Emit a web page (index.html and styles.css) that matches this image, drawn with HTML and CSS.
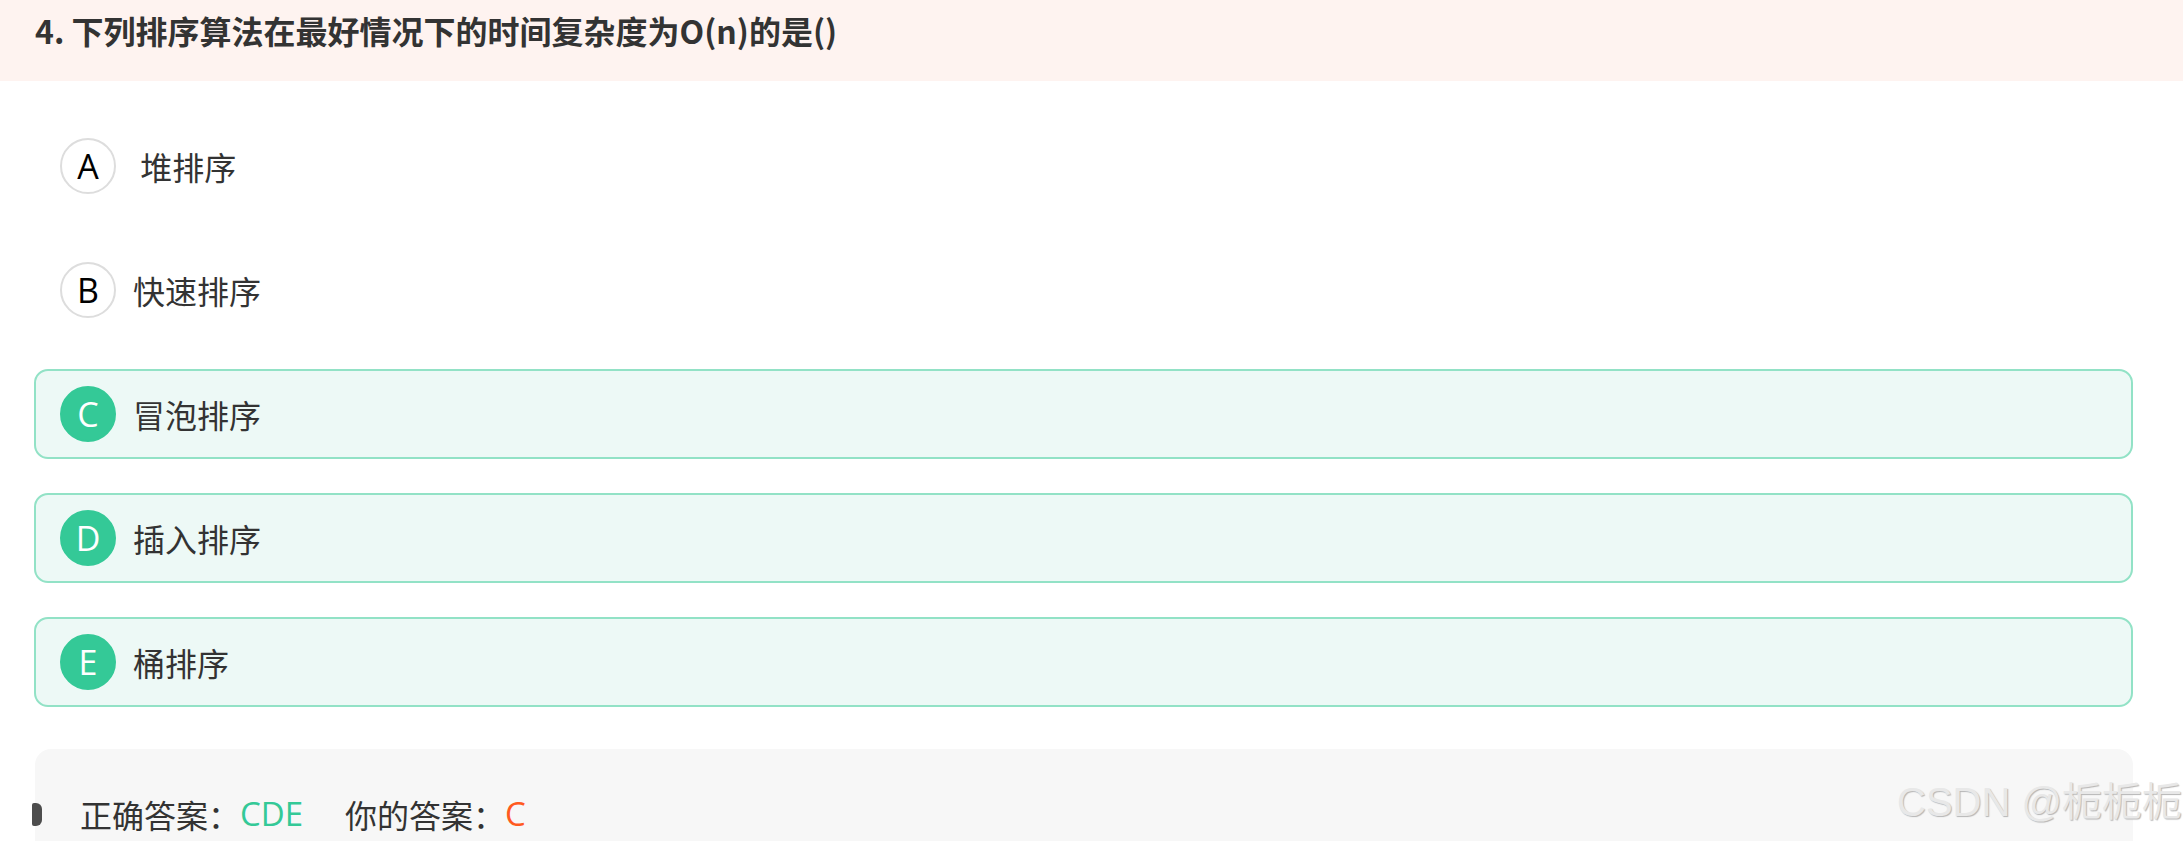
FILE: index.html
```html
<!DOCTYPE html>
<html lang="zh-CN">
<head>
<meta charset="utf-8">
<title>题目</title>
<link rel="stylesheet" href="styles.css">
</head>
<body>
<div class="page">
  <div class="q-title">4. 下列排序算法在最好情况下的时间复杂度为O(n)的是()</div>
  <div class="options">
    <div class="option">
      <span class="badge">A</span>
      <span class="opt-text"> 堆排序</span>
    </div>
    <div class="option">
      <span class="badge">B</span>
      <span class="opt-text">快速排序</span>
    </div>
    <div class="option correct">
      <span class="badge">C</span>
      <span class="opt-text">冒泡排序</span>
    </div>
    <div class="option correct">
      <span class="badge">D</span>
      <span class="opt-text">插入排序</span>
    </div>
    <div class="option correct">
      <span class="badge">E</span>
      <span class="opt-text">桶排序</span>
    </div>
  </div>
  <div class="answer-panel">
    <span class="marker"></span>
    <span class="ans-label">正确答案：</span><span class="ans-right">CDE</span>
    <span class="ans-label your">你的答案：</span><span class="ans-wrong">C</span>
  </div>
  <div class="watermark">CSDN @栀栀栀</div>
</div>
</body>
</html>
```
FILE: styles.css
```css
html, body {
  margin: 0;
  padding: 0;
  background: #ffffff;
  overflow: hidden;
}
body {
  font-family: "Noto Sans CJK SC", "Noto Sans", sans-serif;
  color: #333333;
}
.page {
  position: relative;
  width: 2183px;
  height: 841px;
  overflow: hidden;
}
.q-title {
  background: #fef3f0;
  height: 81px;
  box-sizing: border-box;
  padding: 10px 35px 0;
  font-size: 32px;
  line-height: 40px;
  font-weight: 700;
  color: #333333;
}
.options {
  display: flex;
  flex-direction: column;
  gap: 34px;
  margin: 40px 50px 0 34px;
}
.option {
  display: flex;
  align-items: center;
  height: 90px;
  box-sizing: border-box;
  border: 2px solid transparent;
  border-radius: 14px;
  padding-left: 24px;
}
.option.correct {
  background: #edf9f6;
  border-color: #92e2c6;
}
.badge {
  width: 56px;
  height: 56px;
  box-sizing: border-box;
  border: 2px solid #dddddd;
  border-radius: 50%;
  display: flex;
  align-items: center;
  justify-content: center;
  font-family: "Open Sans", "Noto Sans", sans-serif;
  font-size: 34px;
  line-height: 1;
  color: #000000;
  flex-shrink: 0;
}
.option.correct .badge {
  background: #34c997;
  border-color: #34c997;
  color: #ffffff;
}
.opt-text {
  margin-left: 17px;
  font-size: 32px;
  line-height: 40px;
  color: #333333;
  white-space: pre;
}
.answer-panel {
  margin: 42px 50px 0 35px;
  height: 200px;
  background: #f7f7f7;
  border-radius: 16px 16px 0 0;
  box-sizing: border-box;
  padding-top: 45px;
  display: flex;
  align-items: flex-start;
  font-size: 32px;
  line-height: 40px;
}
.marker {
  width: 10px;
  height: 23px;
  margin-top: 9px;
  margin-left: -3px;
  background: #4d4d4d;
  border-radius: 2px 6px 6px 2px;
}
.ans-label {
  margin-left: 38px;
  color: #333333;
}
.ans-label.your {
  margin-left: 42px;
}
.ans-right {
  color: #34c997;
  font-family: "Open Sans", "Noto Sans", sans-serif;
  font-size: 33px;
}
.ans-wrong {
  color: #ff5a1f;
  font-family: "Open Sans", "Noto Sans", sans-serif;
  font-size: 33px;
}
.watermark {
  position: absolute;
  left: 1897px;
  top: 778px;
  font-family: "Liberation Sans", "Noto Sans CJK SC", sans-serif;
  font-size: 40px;
  line-height: 48px;
  color: #e8e8e8;
  text-shadow: 1px 1px 1px #b5b5b5;
  white-space: nowrap;
}
```
